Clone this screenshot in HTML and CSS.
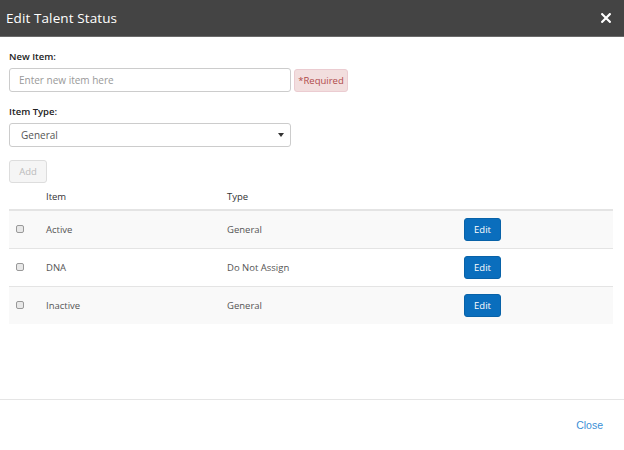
FILE: index.html
```html
<!DOCTYPE html>
<html>
<head>
<meta charset="utf-8">
<link rel="stylesheet" href="styles.css">
</head>
<body>
<div class="modal">
  <div class="header">
    <span class="title">Edit Talent Status</span>
    <svg class="close-x" width="10" height="10" viewBox="0 0 10 10"><path d="M1.2 1.2 L8.8 8.8 M8.8 1.2 L1.2 8.8" stroke="#fff" stroke-width="2.2" stroke-linecap="square"/></svg>
  </div>
  <div class="body">
    <label class="label">New Item:</label>
    <div class="row-input">
      <input class="input" type="text" placeholder="Enter new item here">
      <span class="required">*Required</span>
    </div>
    <label class="label label-type">Item Type:</label>
    <div class="select">
      <span>General</span>
      <span class="caret"></span>
    </div>
    <button class="add" disabled>Add</button>
    <table class="table">
      <thead>
        <tr><th class="c-check"></th><th class="c-item">Item</th><th class="c-type">Type</th><th></th></tr>
      </thead>
      <tbody>
        <tr class="odd"><td class="c-check"><span class="cb"></span></td><td>Active</td><td>General</td><td><button class="edit">Edit</button></td></tr>
        <tr><td class="c-check"><span class="cb"></span></td><td>DNA</td><td>Do Not Assign</td><td><button class="edit">Edit</button></td></tr>
        <tr class="odd"><td class="c-check"><span class="cb"></span></td><td>Inactive</td><td>General</td><td><button class="edit">Edit</button></td></tr>
      </tbody>
    </table>
  </div>
  <div class="footer">
    <span class="close-link">Close</span>
  </div>
</div>
</body>
</html>
```

FILE: styles.css
```css
* { box-sizing: border-box; }
html, body { margin: 0; padding: 0; background: #fff; }
body { width: 624px; height: 450px; font-family: "Open Sans", "DejaVu Sans", sans-serif; color: #333; }
.modal { display: flex; flex-direction: column; height: 450px; }
.header {
  height: 37px; background: #444444; border-bottom: 1px solid #6a6a6a;
  display: flex; align-items: center; justify-content: space-between;
  padding: 0 13px 0 6px;
}
.title { color: #fff; font-size: 13.5px; letter-spacing: 0.1px; }
.close-x { display: block; }
.body { padding: 13px 11px 0 9px; flex: 1; display: flex; flex-direction: column; align-items: flex-start; }
.label { font-size: 9.5px; font-weight: 600; color: #222; height: 13px; line-height: 13px; }
.row-input { display: flex; gap: 3px; margin-top: 5px; }
.input {
  width: 282px; height: 24px; border: 1px solid #ccc; border-radius: 3px;
  font-family: inherit; font-size: 10px; padding: 0 9px; color: #555; outline: none;
}
.input::placeholder { color: #999; }
.required {
  width: 54px; height: 23px; margin-top: 1px; background: #f2dede; border: 1px solid #ebccd1;
  border-radius: 3px; color: #b04a4a; font-size: 9.5px; display: flex; align-items: center; justify-content: center;
}
.label-type { margin-top: 13px; }
.select {
  margin-top: 5px; width: 282px; height: 24px; border: 1px solid #ccc; border-radius: 3px;
  display: flex; align-items: center; justify-content: space-between; padding: 0 6px 0 11px;
  font-size: 10px; color: #555;
}
.caret { width: 0; height: 0; border-left: 3px solid transparent; border-right: 3px solid transparent; border-top: 4px solid #333; }
.add {
  margin-top: 13px; width: 38px; height: 23px; border: 1px solid #ddd; border-radius: 3px;
  background: #f5f5f5; color: #bbb; font-family: inherit; font-size: 9.5px; padding: 0;
}
.table { margin-top: 0; width: 604px; border-collapse: collapse; font-size: 9.5px; color: #555; }
.table th { text-align: left; font-weight: 500; color: #333; height: 27px; border-bottom: 2px solid #e4e4e4; padding: 0; }
.table td { height: 38px; padding: 0; border-bottom: 1px solid #e4e4e4; }
.table tbody tr:last-child td { border-bottom: none; }
.odd td { background: #f9f9f9; }
.c-check { width: 37px; padding-left: 7px !important; }
.c-item { width: 181px; }
.c-type { width: 237px; }
.cb { display: block; width: 8px; height: 8px; border: 1px solid #999; border-radius: 2px; background: #e8e8e8; }
.edit {
  width: 37px; height: 23px; background: #0a6ebd; color: #fff; border: 1px solid #0862a8; border-radius: 3px;
  font-family: "Open Sans", sans-serif; font-size: 9.5px; padding: 0; display: block;
}
.footer { height: 51px; border-top: 1px solid #e5e5e5; display: flex; align-items: center; justify-content: flex-end; padding-right: 21px; }
.close-link { color: #3a8fd6; font-family: "Liberation Sans", Arial, sans-serif; font-size: 10.5px; }
```
